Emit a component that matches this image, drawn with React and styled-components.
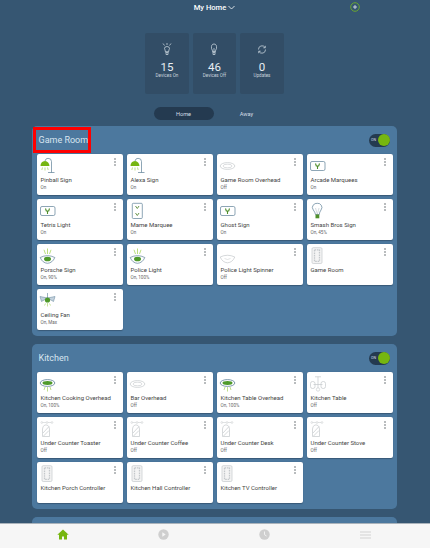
import React from "react";
import styled, { createGlobalStyle } from "styled-components";

const Global = createGlobalStyle`
  html, body { margin: 0; padding: 0; height: 100%; overflow: hidden; background: #365672; }
  #root { height: 100%; }
  * { box-sizing: border-box; }
`;

const Page = styled.div`
  height: 100vh;
  display: flex;
  flex-direction: column;
  background: #365672;
  font-family: Roboto, "Liberation Sans", sans-serif;
`;
const Scroll = styled.main`
  flex: 1;
  min-height: 0;
  overflow: hidden;
  padding: 0 33px 0 32px;
`;
const TopBar = styled.header`
  height: 15px;
  display: flex;
  align-items: center;
  justify-content: center;
  gap: 2px;
  position: relative;
  color: #fff;
  font-size: 7.6px;
  font-weight: 500;
`;
const AddButton = styled.span`
  position: absolute;
  left: 318px;
  top: 2px;
  width: 10px;
  height: 10px;
  display: flex;
`;
const Stats = styled.section`
  display: flex;
  justify-content: center;
  gap: 4.1px;
  margin-top: 18px;
`;
const Stat = styled.div`
  width: 43.4px;
  height: 61px;
  border-radius: 2px;
  background: #324d66;
  color: #e8eef3;
  display: flex;
  flex-direction: column;
  align-items: center;
  padding-top: 10px;
`;
const StatIcon = styled.svg`
  width: 10px;
  height: 13px;
  fill: none;
  stroke: #d9e2ea;
  stroke-width: 0.7;
`;
const StatNum = styled.div`
  font-size: 11.5px;
  line-height: 12px;
  margin-top: 5px;
  font-weight: 400;
`;
const StatLabel = styled.div`
  font-size: 4.6px;
  line-height: 6px;
  color: #c6d2dc;
`;
const Tabs = styled.nav`
  display: flex;
  justify-content: center;
  align-items: center;
  margin-top: 13px;
  height: 13px;
  gap: 3px;
  padding-left: 1px;
`;
const Tab = styled.div`
  width: 60px;
  height: 13px;
  border-radius: 7px;
  background: ${(p) => (p.$active ? "#243a50" : "transparent")};
  color: #d5dee6;
  font-size: 5.6px;
  display: flex;
  align-items: center;
  justify-content: center;
`;
const Section = styled.section`
  position: relative;
  margin-top: ${(p) => p.$gap}px;
  background: #4c789e;
  border-radius: 5px;
  padding: 0 4.5px 6px;
  min-height: ${(p) => (p.$stub ? 60 : 0)}px;
`;
const SectionHead = styled.div`
  height: 28px;
  display: flex;
  align-items: center;
  justify-content: space-between;
  padding: 0 2.5px 0 2px;
`;
const SectionTitle = styled.h2`
  margin: 0;
  font-size: 9px;
  font-weight: 400;
  color: #d8e5f0;
`;
const Highlight = styled.div`
  position: absolute;
  left: 1px;
  top: 1px;
  width: 58px;
  height: 26px;
  border: 3px solid #f00;
`;
const Switch = styled.div`
  width: 21px;
  height: 13px;
  border-radius: 7px;
  background: #243a50;
  position: relative;
  color: #d5dee6;
  font-size: 3.6px;
  line-height: 13px;
  padding-left: 2px;
`;
const Knob = styled.span`
  position: absolute;
  right: 0;
  top: 0.5px;
  width: 12px;
  height: 12px;
  border-radius: 50%;
  background: #76b610;
`;
const Grid = styled.div`
  display: grid;
  grid-template-columns: repeat(4, 86px);
  grid-auto-rows: 41px;
  gap: 4px;
`;
const Card = styled.article`
  background: #fff;
  border-radius: 2px;
  box-shadow: 0 0.5px 1px rgba(30, 50, 70, 0.45);
  padding: 2px 3px 0 4px;
  overflow: hidden;
`;
const CardTop = styled.div`
  height: 19px;
  display: flex;
  justify-content: space-between;
  align-items: flex-start;
`;
const Dots = styled.span`
  display: flex;
  flex-direction: column;
  gap: 1px;
  margin: 2px 3.3px 0 0;
  i {
    display: block;
    width: 2px;
    height: 2px;
    border-radius: 50%;
    background: #a2a6a9;
  }
`;
const Name = styled.div`
  font-size: 6px;
  line-height: 8px;
  color: #444;
  margin-top: 0.5px;
  white-space: nowrap;
`;
const Status = styled.div`
  font-size: 4.6px;
  line-height: 6px;
  margin-top: 1.5px;
  color: #666;
`;
const BottomBar = styled.footer`
  flex: none;
  height: 25px;
  background: #f6f6f6;
  border-top: 1px solid #aab3bb;
  display: grid;
  grid-template-columns: repeat(4, 1fr);
  padding: 0 14px 3px 12px;
`;
const BarItem = styled.div`
  display: flex;
  align-items: center;
  justify-content: center;
`;
const IconSvg = styled.svg`
  display: block;
  flex: none;
  width: 16px;
  height: 16px;
  margin: 1.5px 0 0 -1px;
  overflow: visible;
`;

const GREEN = "#76b610";
const LINE = "#5d7f97";
const GRAY = "#c4c8cb";

const paths = {
  lamp: (
    <>
      <path d="M8 14.500h6.500M11.500 14.500V3.500Q11.500 .3 8 .3 5.500 .3 5 3" stroke={LINE} strokeWidth=".7" fill="none" />
      <path d="M.5 8q0-4.500 4.500-5 4 .5 4.500 5z" fill={GREEN} />
      <path d="M2.500 9.500l-.7 2.500M5 9.500v3M7.500 9.500l.7 2.500" stroke="#a5d35a" strokeWidth=".7" />
    </>
  ),
  sign: (
    <>
      <rect x=".5" y="3.500" width="14.500" height="9" rx="1.500" stroke={LINE} strokeWidth=".7" fill="none" />
      <path d="M5.500 5.500l.8 2.500h2.400l.8-2.500M7.500 8v3" stroke="#4f8f2a" strokeWidth="1.100" fill="none" />
    </>
  ),
  marquee: (
    <>
      <rect x="2.300" y=".3" width="10" height="15.200" rx="1" stroke={LINE} strokeWidth=".7" fill="none" />
      <path d="M5.500 3l1.800 2.500L9 3M5.500 10l1.800 2.500L9 10" stroke="#5a8a3a" strokeWidth=".9" fill="none" />
    </>
  ),
  flushOff: (
    <>
      <ellipse cx="7.500" cy="8" rx="7.300" ry="3.400" stroke={GRAY} strokeWidth=".7" fill="none" />
      <ellipse cx="7.500" cy="8" rx="4.500" ry="1.800" stroke={GRAY} strokeWidth=".6" fill="none" />
    </>
  ),
  bulb: (
    <>
      <path d="M5.500 11.500Q5 9 3.300 7 1.500 4.500 3 2.300 5 0 7.300 .3 9.800 0 11.300 2.300 12.800 4.500 11 7 9.500 9 9.300 11.500z" stroke={LINE} strokeWidth=".7" fill="none" />
      <path d="M5.500 5l1.800 6.500L9 5" stroke="#9aa9b5" strokeWidth=".4" fill="none" />
      <rect x="5.500" y="11.500" width="3.800" height="3.800" fill="#4f8f2a" />
    </>
  ),
  flushOn: (
    <>
      <path d="M7.500 .5V6M4 1.800L5.500 6M11 1.800L9.500 6" stroke="#9ed048" strokeWidth=".7" />
      <path d="M.2 9.500Q7.500 5.800 14.800 9.500 12.500 15 7.500 15.300 2.500 15 .2 9.500z" stroke={LINE} strokeWidth=".7" fill="none" />
      <ellipse cx="7.500" cy="11" rx="3.500" ry="2.300" fill="#4f9a2a" />
    </>
  ),
  coneOff: (
    <>
      <path d="M.2 9Q7.500 5.500 14.800 9 12.500 14.500 7.500 14.800 2.500 14.500 .2 9z" stroke={GRAY} strokeWidth=".7" fill="none" />
      <path d="M4.500 10.500q3 2 6 0" stroke={GRAY} strokeWidth=".5" fill="none" />
    </>
  ),
  panel: (
    <>
      <rect x="2" y="-.3" width="10" height="15.800" rx="1.200" stroke={GRAY} strokeWidth=".7" fill="#f4f4f4" />
      <rect x="4.500" y="1.800" width="5" height="11.500" stroke={GRAY} strokeWidth="1.300" strokeDasharray="1.600 .8" fill="none" />
    </>
  ),
  fan: (
    <>
      <path d="M7.500 0v5" stroke={LINE} strokeWidth=".6" />
      <path d="M7.500 5L0 3.500 1.500 8.500zM7.500 5L15 3.500 13.500 8.500z" fill="#c5d3de" stroke={LINE} strokeWidth=".5" />
      <circle cx="7.500" cy="7" r="2.600" fill="#4f9a2a" />
      <path d="M7.500 10v3.500M5.500 10.500l-1 2M9.500 10.500l1 2" stroke="#a5d35a" strokeWidth=".6" />
    </>
  ),
  ovalOn: (
    <>
      <ellipse cx="7.500" cy="7" rx="7.300" ry="3.400" stroke={LINE} strokeWidth=".8" fill="none" />
      <ellipse cx="7.500" cy="7" rx="5" ry="1.900" fill="#4f9a2a" />
      <path d="M7.500 11v4.500M5 11l-1 3M10 11l1 3" stroke="#a5d35a" strokeWidth=".7" />
    </>
  ),
  chandelier: (
    <>
      <path d="M5 .8h6M8 .8V14M3.500 8.500h9" stroke={GRAY} strokeWidth=".7" fill="none" />
      <rect x=".5" y="5.500" width="4.500" height="7" rx="2" stroke={GRAY} strokeWidth=".7" fill="none" />
      <rect x="11" y="5.500" width="4.500" height="7" rx="2" stroke={GRAY} strokeWidth=".7" fill="none" />
      <circle cx="8" cy="13.500" r="1.700" stroke={GRAY} strokeWidth=".6" fill="#fff" />
    </>
  ),
  under: (
    <>
      <path d="M1.500 1.500h11" stroke={GRAY} strokeWidth=".5" />
      <circle cx="1.800" cy="1.500" r=".9" fill="#fff" stroke={GRAY} strokeWidth=".5" />
      <circle cx="7" cy="1.500" r=".9" fill="#fff" stroke={GRAY} strokeWidth=".5" />
      <circle cx="12" cy="1.500" r=".9" fill="#fff" stroke={GRAY} strokeWidth=".5" />
      <path d="M2.500 15.500V8q0-3 2.500-4H7q2.500 1 2.500 4v7.500z" stroke={GRAY} strokeWidth=".7" fill="none" />
      <path d="M3 12l6-6.500M3.500 15L9 9.500" stroke={GRAY} strokeWidth=".7" fill="none" />
    </>
  ),
};

const Icon = ({ kind }) => <IconSvg viewBox="0 0 16 16">{paths[kind]}</IconSvg>;

const gameRoom = [
  ["lamp", "Pinball Sign", "On"],
  ["lamp", "Alexa Sign", "On"],
  ["flushOff", "Game Room Overhead", "Off"],
  ["sign", "Arcade Marquees", "On"],
  ["sign", "Tetris Light", "On"],
  ["marquee", "Mame Marquee", "On"],
  ["sign", "Ghost Sign", "On"],
  ["bulb", "Smash Bros Sign", "On, 45%"],
  ["flushOn", "Porsche Sign", "On, 90%"],
  ["flushOn", "Police Light", "On, 100%"],
  ["coneOff", "Police Light Spinner", "Off"],
  ["panel", "Game Room", ""],
  ["fan", "Ceiling Fan", "On, Max"],
];
const kitchen = [
  ["ovalOn", "Kitchen Cooking Overhead", "On, 100%"],
  ["flushOff", "Bar Overhead", "Off"],
  ["ovalOn", "Kitchen Table Overhead", "On, 100%"],
  ["chandelier", "Kitchen Table", "Off"],
  ["under", "Under Counter Toaster", "Off"],
  ["under", "Under Counter Coffee", "Off"],
  ["under", "Under Counter Desk", "Off"],
  ["under", "Under Counter Stove", "Off"],
  ["panel", "Kitchen Porch Controller", ""],
  ["panel", "Kitchen Hall Controller", ""],
  ["panel", "Kitchen TV Controller", ""],
];

const DeviceCard = ({ kind, name, status }) => (
  <Card>
    <CardTop>
      <Icon kind={kind} />
      <Dots><i /><i /><i /></Dots>
    </CardTop>
    <Name>{name}</Name>
    {status && <Status>{status}</Status>}
  </Card>
);

const Room = ({ title, items, gap, marked }) => (
  <Section $gap={gap}>
    {marked && <Highlight />}
    <SectionHead>
      <SectionTitle>{title}</SectionTitle>
      <Switch>ON<Knob /></Switch>
    </SectionHead>
    <Grid>
      {items.map(([k, n, s]) => <DeviceCard key={n} kind={k} name={n} status={s} />)}
    </Grid>
  </Section>
);

export default function App() {
  return (
    <Page>
      <Global />
      <Scroll>
        <TopBar>
          My Home
          <svg width="7" height="5" viewBox="0 0 7 5"><path d="M.5 1l3 3 3-3" stroke="#fff" strokeWidth=".8" fill="none" /></svg>
          <AddButton>
            <svg width="10" height="10" viewBox="0 0 10 10">
              <circle cx="5" cy="5" r="4.300" stroke="#6fae2a" strokeWidth=".9" fill="none" />
              <path d="M5 3v4M3 5h4" stroke="#e8eef3" strokeWidth=".8" />
            </svg>
          </AddButton>
        </TopBar>
        <Stats>
          <Stat>
            <StatIcon viewBox="0 0 10 13">
              <path d="M3.500 9Q3 6.500 2.500 5.500 2.500 3.500 5 3.500 7.500 3.500 7.500 5.500 7 6.500 6.500 9zM4 9h2v2.500H4zM1 .5l1.500 2M9 .5l-1.500 2M5 0v2" />
            </StatIcon>
            <StatNum>15</StatNum>
            <StatLabel>Devices On</StatLabel>
          </Stat>
          <Stat>
            <StatIcon viewBox="0 0 10 13">
              <path d="M3.700 9Q3.500 7 2.500 5.500 2 1 5 1 8 1 7.500 5.500 6.500 7 6.300 9zM4 9h2v2.500H4zM5 9V5" />
            </StatIcon>
            <StatNum>46</StatNum>
            <StatLabel>Devices Off</StatLabel>
          </Stat>
          <Stat>
            <StatIcon viewBox="0 0 10 13">
              <path d="M1.500 6.500A3.500 3.500 0 0 1 8 4.500M8.500 6.500A3.500 3.500 0 0 1 2 8.500M8.300 2.800V4.800H6.300M1.700 10.200V8.200H3.700" />
            </StatIcon>
            <StatNum>0</StatNum>
            <StatLabel>Updates</StatLabel>
          </Stat>
        </Stats>
        <Tabs>
          <Tab $active>Home</Tab>
          <Tab>Away</Tab>
        </Tabs>
        <Room title="Game Room" items={gameRoom} gap={6} marked />
        <Room title="Kitchen" items={kitchen} gap={8} />
        <Section $gap={8} $stub />
      </Scroll>
      <BottomBar>
        <BarItem>
          <svg width="12" height="11" viewBox="0 0 12 11"><path d="M6 .5L.3 5.800h1.700V10.500h3V7.500h2v3h3V5.800h1.700z" fill={GREEN} /></svg>
        </BarItem>
        <BarItem>
          <svg width="11" height="11" viewBox="0 0 11 11"><circle cx="5.500" cy="5.500" r="5.200" fill="#cfcfcf" /><path d="M4.300 3.300l3.400 2.200-3.400 2.200z" fill="#f6f6f6" /></svg>
        </BarItem>
        <BarItem>
          <svg width="11" height="11" viewBox="0 0 11 11"><circle cx="5.500" cy="5.500" r="5.200" fill="#cfcfcf" /><path d="M5.500 2.500v3.200l2 1.300" stroke="#f6f6f6" strokeWidth=".9" fill="none" /></svg>
        </BarItem>
        <BarItem>
          <svg width="11" height="8" viewBox="0 0 11 8"><path d="M0 1h11M0 4h11M0 7h11" stroke="#d2d2d2" strokeWidth="1" /></svg>
        </BarItem>
      </BottomBar>
    </Page>
  );
}
